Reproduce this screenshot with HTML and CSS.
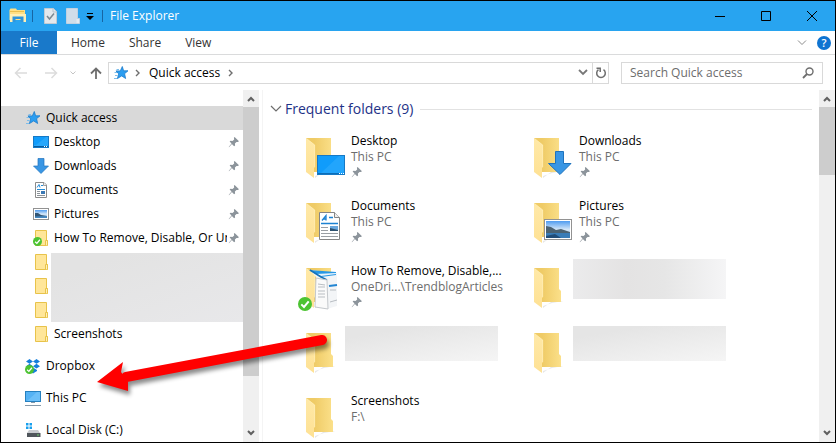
FILE: index.html
```html
<!DOCTYPE html>
<html lang="en">
<head>
<meta charset="utf-8">
<title>File Explorer</title>
<link rel="stylesheet" href="styles.css">
</head>
<body>
<svg class="defs" aria-hidden="true">
  <defs>
    <linearGradient id="back" x1="0" y1="0" x2="1" y2="0"><stop offset="0.3" stop-color="#efcb66"/><stop offset="1" stop-color="#fbe08a"/></linearGradient>
    <linearGradient id="flap" x1="0" y1="0" x2="0" y2="1"><stop offset="0" stop-color="#ffe9a8"/><stop offset="1" stop-color="#fee194"/></linearGradient>
    <linearGradient id="sky" x1="0" y1="0" x2="0" y2="1"><stop offset="0" stop-color="#4f9cf0"/><stop offset="0.5" stop-color="#d3e6f8"/><stop offset="1" stop-color="#a9c8e8"/></linearGradient>
  </defs>
  <symbol id="star" viewBox="0 0 16 16">
    <path d="M9.300 1.500L10.600 5.800H15L11.600 8.700L12.600 13.500L8.700 10.900L4.400 13.600L5.700 8.900L3 5.900H7.300Z" fill="#2b9df0" stroke="#1e7ccb" stroke-width=".8"/>
    <path d="M3.500 4.500H6M1.500 7.500H4M2 10.500H4.500M1 13.500H4" stroke="#7dbdea" stroke-width="1"/>
  </symbol>
  <symbol id="pin" viewBox="0 0 12 12">
    <path d="M6.600 1L11 5.200L9.800 6L8.500 5.900L6.900 7.600L7.100 9.400L6.100 10.200L3.900 8L1 11.300L.7 11L3.500 7.600L1.600 5.500L2.500 4.700L4.500 4.900L6.200 3.400L5.900 1.800Z" fill="#8c949b"/>
  </symbol>
  <symbol id="smallfolder" viewBox="0 0 16 16">
    <path d="M2.500 .5H13.500V10.500H14.500V15.500H2.500Z" fill="#ffe699" stroke="#e8c34a"/>
    <path d="M12.500 15V10.500H14.500V15.500" fill="#fff0b8" stroke="#e8c34a"/>
  </symbol>
  <symbol id="check" viewBox="0 0 14 14">
    <circle cx="7" cy="7" r="7" fill="#4cc332"/>
    <path d="M3.300 7.400L6 10L10.700 4.300" fill="none" stroke="#fff" stroke-width="2"/>
  </symbol>
  <symbol id="desktop" viewBox="0 0 16 16">
    <rect x=".5" y="2.500" width="15" height="11" fill="#109cfb" stroke="#1679c5"/>
    <path d="M3 11L13 3H15V12H1V11Z" fill="#38affc" opacity=".6"/>
    <path d="M1 12.500H11M12 12.500H13M14 12.500H15" stroke="#075b9e"/>
    <path d="M11 12.500H12M13 12.500H14" stroke="#fff"/>
  </symbol>
  <symbol id="down" viewBox="0 0 16 16">
    <path d="M5 .5H11V8H15.500L8 15.500L.5 8H5Z" fill="#3996e4" stroke="#1f73bd" stroke-width=".7"/>
  </symbol>
  <symbol id="doc" viewBox="0 0 16 16">
    <path d="M2.500 .5H11L13.500 3V15.500H2.500Z" fill="#fff" stroke="#8b8b8b"/>
    <path d="M10.500 .5V3.500H13.500" fill="#eee" stroke="#8b8b8b" stroke-width=".8"/>
    <path d="M4 5.500L6 2.500L7 5.500M8 3.500H10M4 7.500H12" fill="none" stroke="#248bd7"/>
    <path d="M4 9.500H7M4 11.500H7M4 13.500H12" stroke="#8b9298"/><rect x="8" y="9" width="4" height="3" fill="#3c79b5"/>
  </symbol>
  <symbol id="picture" viewBox="0 0 16 16">
    <rect x=".5" y="2.500" width="15" height="11" fill="#fff" stroke="#929292"/>
    <rect x="2" y="4" width="12" height="8" fill="url(#sky)"/>
    <path d="M2 7L5 7L8 9L14 10V12H2Z" fill="#315675"/><path d="M2 10.500L14 10V12H2Z" fill="#4487c0"/>
  </symbol>
  <symbol id="bigfolder" viewBox="0 0 48 48">
    <path d="M18 43L27 40L38 38L36 39H26L18 45Z" fill="#ddd" opacity=".7"/>
    <path d="M9 5H34V26L36 28V39H9Z" fill="url(#back)"/>
    <path d="M9 5L18 12V34L17 35V45L9 39Z" fill="url(#flap)"/>
    <path d="M9.500 5.500L17.700 12V34" fill="none" stroke="#fff0bd" stroke-width=".6"/>
  </symbol>
</svg>

<div class="window">
  <header class="titlebar">
    <svg class="app" width="18" height="16" viewBox="0 0 18 16"><path d="M.5 2L1.500 .5H7L8 2H16V12H.5Z" fill="#ffe085"/><path d="M1 3.500H15" stroke="#eac04f"/><path d="M1 6H17V14H13V10H5V14H1Z" fill="#fff0b5"/><path d="M3.500 14V8.500H14.500V14H11.500V11H6.500V14Z" fill="#2f95dc"/></svg>
    <span class="sep"></span>
    <button class="quick first" aria-label="Properties"><svg width="13" height="16" viewBox="0 0 13 16"><path d="M.5 .5H9.500L12.500 3.500V15.500H.5Z" fill="#e4e8ec" stroke="#c2cbd3"/><path d="M9 .5V4H12.500" fill="none" stroke="#b9c3cc"/><path d="M3 8L5.500 11L10 5.500" fill="none" stroke="#7d8992" stroke-width="1.500"/></svg></button>
    <button class="quick" aria-label="New folder"><svg width="14" height="16" viewBox="0 0 14 16"><path d="M.5 .5H11.500V10.500H13.500V15.500H.5Z" fill="#d0dde9" stroke="#c0d1e1"/><path d="M10.500 15V11H13V15Z" fill="#e3ebf2"/></svg></button>
    <button class="quick menu" aria-label="Customize toolbar"><svg width="8" height="8" viewBox="0 0 8 8"><path d="M1 1H7V2H1ZM0 4H8L4 8Z" fill="#000"/></svg></button>
    <span class="sep late"></span>
    <h1>File Explorer</h1>
    <div class="controls">
      <button aria-label="Minimize"><svg width="10" height="10" viewBox="0 0 10 10"><path d="M0 5.500H10"/></svg></button>
      <button aria-label="Maximize"><svg width="10" height="10" viewBox="0 0 10 10"><path d="M.5 .5H9.500V9.500H.5Z"/></svg></button>
      <button aria-label="Close"><svg width="10" height="10" viewBox="0 0 10 10"><path d="M0 0L10 10M10 0L0 10"/></svg></button>
    </div>
  </header>

  <nav class="ribbon" aria-label="Ribbon">
    <button class="file">File</button><button>Home</button><button>Share</button><button>View</button>
    <button class="expand" aria-label="Expand ribbon"><svg width="10" height="6" viewBox="0 0 10 6"><path d="M1 .5L5 4.500L9 .5" fill="none" stroke="#8b8b8b"/></svg></button>
    <button class="help" aria-label="Help">?</button>
  </nav>

  <div class="locator">
    <button class="arrow" aria-label="Back"><svg width="14" height="12" viewBox="0 0 14 12"><path d="M13 6H2M6.500 1L1.500 6L6.500 11" fill="none" stroke="#dcdcdc" stroke-width="1.500"/></svg></button>
    <button class="arrow" aria-label="Forward"><svg width="14" height="12" viewBox="0 0 14 12"><path d="M1 6H12M7.500 1L12.500 6L7.500 11" fill="none" stroke="#dcdcdc" stroke-width="1.500"/></svg></button>
    <button class="recent" aria-label="Recent locations"><svg width="6" height="4" viewBox="0 0 6 4"><path d="M.5 .5L3 3L5.500 .5" fill="none" stroke="#c4c4c4"/></svg></button>
    <button class="up" aria-label="Up"><svg width="12" height="12" viewBox="0 0 12 12"><path d="M6 12V1.500M1 6.500L6 1.500L11 6.500" fill="none" stroke="#6e6e6e" stroke-width="1.800"/></svg></button>
    <div class="address">
      <svg width="16" height="16"><use href="#star"/></svg>
      <svg class="crumb" width="5" height="8" viewBox="0 0 5 8"><path d="M1 1L4 4L1 7" fill="none" stroke="#6e6e6e" stroke-width="1.400"/></svg>
      <button>Quick access</button>
      <svg width="5" height="8" viewBox="0 0 5 8"><path d="M1 1L4 4L1 7" fill="none" stroke="#6e6e6e" stroke-width="1.400"/></svg>
      <button class="history" aria-label="Previous locations"><svg width="10" height="7" viewBox="0 0 10 7"><path d="M1 1L5 5L9 1" fill="none" stroke="#777" stroke-width="1.800"/></svg></button>
      <button class="refresh" aria-label="Refresh"><svg width="12" height="12" viewBox="0 0 12 12"><path d="M8.500 2.700A4.300 4.300 0 1 1 3.500 2.700" fill="none" stroke="#6e6e6e" stroke-width="1.500"/><path d="M1.500 1.200H5.200V5" fill="none" stroke="#6e6e6e" stroke-width="1.500"/></svg></button>
    </div>
    <div class="search">
      <input id="q" type="text" placeholder="Search Quick access">
      <label for="q" aria-label="Search Quick access"><svg width="12" height="12" viewBox="0 0 12 12"><circle cx="7.500" cy="4.500" r="3.500" fill="none" stroke="#6e6e6e" stroke-width="1.400"/><path d="M5 7L1 11" stroke="#6e6e6e" stroke-width="1.800"/></svg></label>
    </div>
  </div>

  <div class="body">
    <aside class="sidebar">
      <ul class="tree">
        <li class="top selected"><svg width="16" height="16"><use href="#star"/></svg><span>Quick access</span></li>
        <li><svg width="16" height="16"><use href="#desktop"/></svg><span>Desktop</span><svg class="pin" width="12" height="12"><use href="#pin"/></svg></li>
        <li><svg width="16" height="16"><use href="#down"/></svg><span>Downloads</span><svg class="pin" width="12" height="12"><use href="#pin"/></svg></li>
        <li><svg width="16" height="16"><use href="#doc"/></svg><span>Documents</span><svg class="pin" width="12" height="12"><use href="#pin"/></svg></li>
        <li><svg width="16" height="16"><use href="#picture"/></svg><span>Pictures</span><svg class="pin" width="12" height="12"><use href="#pin"/></svg></li>
        <li><svg width="16" height="16" viewBox="0 0 16 16"><use href="#smallfolder" width="16" height="16"/><use href="#check" y="7" width="9" height="9"/></svg><span>How To Remove, Disable, Or Uninstall</span><svg class="pin" width="12" height="12"><use href="#pin"/></svg></li>
        <li class="masked">
          <div class="stack"><svg width="16" height="16"><use href="#smallfolder"/></svg><svg width="16" height="16"><use href="#smallfolder"/></svg><svg width="16" height="16"><use href="#smallfolder"/></svg></div>
          <div class="mask"></div>
        </li>
        <li><svg width="16" height="16"><use href="#smallfolder"/></svg><span>Screenshots</span></li>
        <li class="top spaced"><svg width="16" height="16" viewBox="0 0 16 16"><path d="M4.500 1L8 3.400L4.500 5.800L1 3.400ZM11.500 1L15 3.400L11.500 5.800L8 3.400ZM4.500 5.800L8 8.200L4.500 10.600L1 8.200ZM11.500 5.800L15 8.200L11.500 10.600L8 8.200ZM8 9.500L12 12V13L8 15.500L4 13V12Z" fill="#157fdc"/><use href="#check" y="7" width="9" height="9"/></svg><span>Dropbox</span></li>
        <li class="top spaced"><svg width="16" height="16" viewBox="0 0 16 16"><rect x=".5" y="1.500" width="15" height="10" fill="#55b2f4" stroke="#2680bf"/><path d="M2 11L12 2H15V11Z" fill="#7cc8fa" opacity=".6"/><path d="M6 12.500H10M0 15.500H16" stroke="#8598a8"/></svg><span>This PC</span></li>
        <li class="top spaced"><svg width="16" height="16" viewBox="0 0 16 16"><path d="M1 1H3.500V3.500H1ZM4.500 1H7V3.500H4.500ZM1 4.500H3.500V7H1ZM4.500 4.500H7V7H4.500Z" fill="#18a0ee"/><path d="M4 8H13L15 11H2Z" fill="#c9ccd0"/><path d="M2 11H15.500V15H2Z" fill="#50565c"/><path d="M12 13H14" stroke="#6ad16a"/></svg><span>Local Disk (C:)</span></li>
      </ul>
      <div class="scroll long"><svg width="8" height="6" viewBox="0 0 8 6"><path d="M1 5L4 2L7 5"/></svg><i></i><svg width="8" height="6" viewBox="0 0 8 6"><path d="M1 1L4 4L7 1"/></svg></div>
    </aside>

    <main class="content">
      <section>
        <h2><svg width="12" height="8" viewBox="0 0 12 8"><path d="M1 1L6 6L11 1" fill="none" stroke="#6d6d6d" stroke-width="1.200"/></svg><span>Frequent folders (9)</span></h2>
        <div class="tiles">
          <article><svg width="48" height="48" viewBox="0 0 48 48"><use href="#bigfolder" width="48" height="48"/><rect x="20.500" y="22.500" width="27" height="19" fill="#109cfb" stroke="#1679c5"/><path d="M24 40L42 23H47V40Z" fill="#2fabfd" opacity=".6"/><path d="M21 40.500H42" stroke="#0b6db7"/><path d="M42 40.500H47" stroke="#fff" stroke-dasharray="1 1"/></svg><div class="info"><h3>Desktop</h3><p>This PC</p><svg width="12" height="12"><use href="#pin"/></svg></div></article>
          <article><svg width="48" height="48" viewBox="0 0 48 48"><use href="#bigfolder" width="48" height="48"/><path d="M30.500 18.500H38.500V30.500H46L35 41.500L23.500 30.500H30.500Z" fill="#3996e4" stroke="#1f73bd"/></svg><div class="info"><h3>Downloads</h3><p>This PC</p><svg width="12" height="12"><use href="#pin"/></svg></div></article>
          <article><svg width="48" height="48" viewBox="0 0 48 48"><use href="#bigfolder" width="48" height="48"/><path d="M22.500 14.500H37.500L42.500 19.500V41.500H22.500Z" fill="#fff" stroke="#858585"/><path d="M37.500 14.500V19.500H42.500" fill="#eee" stroke="#858585"/><path d="M25 22.500L29 17.500V22.500M26.500 21H29M32 19.500H36M24 25.500H41" fill="none" stroke="#1d82d2" stroke-width="1.300"/><path d="M24 29.500H31M24 32.500H31M24 35.500H41M24 38.500H41" stroke="#9a9fa4"/><rect x="33" y="28" width="8" height="5" fill="#69a7dd"/><path d="M33 30L41 32V33H33Z" fill="#2d516f"/></svg><div class="info"><h3>Documents</h3><p>This PC</p><svg width="12" height="12"><use href="#pin"/></svg></div></article>
          <article><svg width="48" height="48" viewBox="0 0 48 48"><use href="#bigfolder" width="48" height="48"/><rect x="19.500" y="21.500" width="27" height="20" fill="#fff" stroke="#929292"/><rect x="21" y="23" width="24" height="17" fill="url(#sky)"/><path d="M21 28L26 29L31 32L36 31L45 34V36H21Z" fill="#4b6272"/><path d="M21 35H45V40H21Z" fill="#397cb7"/><path d="M21 38L30 36L36 40H21Z" fill="#214d78"/></svg><div class="info"><h3>Pictures</h3><p>This PC</p><svg width="12" height="12"><use href="#pin"/></svg></div></article>
          <article><svg width="48" height="48" viewBox="0 0 48 48"><use href="#bigfolder" width="48" height="48"/><path d="M13 7L40 10V43L30 46L18 44L19 14Z" fill="#f3f5f7"/><path d="M12 7L39 9V12L24 14Z" fill="#2697e4"/><path d="M19 11L39 10V11L24 13Z" fill="#e9f4fc"/><path d="M13 7L24 14L30 17" fill="none" stroke="#1572b9" stroke-width="1.500"/><path d="M19 15L30 17L31 46L18 44Z" fill="#fafafa" stroke="#c4c8cc"/><path d="M32 23L40 22" stroke="#2385d2" stroke-width="2"/><path d="M33 27H39M33 39L40 37M21 21L28 22M21 24H28M21 28H28M21 31H28M21 34H28" stroke="#b8bdc2"/><use href="#check" x="1" y="34" width="14" height="14"/></svg><div class="info"><h3>How To Remove, Disable,...</h3><p>OneDri...\TrendblogArticles</p><svg width="12" height="12"><use href="#pin"/></svg></div></article>
          <article><svg width="48" height="48"><use href="#bigfolder"/></svg><div class="mask tall"></div></article>
          <article><svg width="48" height="48"><use href="#bigfolder"/></svg><div class="mask"></div></article>
          <article><svg width="48" height="48"><use href="#bigfolder"/></svg><div class="mask"></div></article>
          <article><svg width="48" height="48"><use href="#bigfolder"/></svg><div class="info"><h3>Screenshots</h3><p>F:\</p></div></article>
        </div>
      </section>
      <div class="scroll short"><svg width="8" height="6" viewBox="0 0 8 6"><path d="M1 5L4 2L7 5"/></svg><i></i><svg width="8" height="6" viewBox="0 0 8 6"><path d="M1 1L4 4L7 1"/></svg></div>
    </main>
  </div>
</div>
<svg class="pointer" width="250" height="80" viewBox="0 0 250 80" aria-hidden="true"><path d="M232 14L36 51" fill="none" stroke="#f00" stroke-width="10" stroke-linecap="round"/><path d="M7 56L33 36L31 46L38 56L38 65Z" fill="#f00"/></svg>
</body>
</html>
```
FILE: styles.css
```css
* { box-sizing: border-box; }
body { margin: 0; font: 12px/16px "Open Sans", "Noto Sans", sans-serif; color: #000; }
button, input { margin: 0; padding: 0; border: 0; background: none; font: inherit; color: inherit; }
h1, h2, h3, p, ul { margin: 0; padding: 0; font: inherit; }
svg { display: block; flex: none; }
.defs { position: absolute; width: 0; height: 0; }

.window { display: flex; flex-direction: column; height: 100vh; border: 1px solid #000; background: #fff; overflow: hidden; }

.titlebar { display: flex; align-items: center; flex: none; height: 30px; padding-left: 8px; background: #28a4f0; color: #fff; }
.sep { width: 1px; height: 12px; margin-left: 5px; background: #1765a3; }
.sep.late { margin: 0 7px 0 8px; }
.quick { margin-left: 9px; }
.quick.first { margin-left: 11px; }
.quick.menu { margin-left: 6px; }
.controls { display: flex; margin-left: auto; }
.controls button { display: grid; place-items: center; width: 46px; height: 30px; }
.controls path { fill: none; stroke: #000; }

.ribbon { display: flex; flex: none; height: 24px; border-bottom: 1px solid #dadbdc; color: #333; }
.ribbon button { padding: 0 12px; }
.ribbon .file { width: 56px; margin-right: 2px; background: #1979ca; color: #fff; }
.ribbon .expand { margin-left: auto; padding: 0 10px 0 0; }
.ribbon .help { align-self: center; width: 14px; height: 14px; margin-right: 4px; padding: 0; border-radius: 50%; background: #0f74d1; color: #fff; font-size: 11px; line-height: 14px; font-weight: 600; }

.locator { display: flex; align-items: center; flex: none; height: 35px; padding: 0 12px 0 13px; }
.arrow { margin-right: 16px; }
.arrow + .recent { margin: 0 14px 0 -4px; }
.up { margin-right: 6px; }
.address { display: flex; align-items: center; flex: 1; height: 22px; padding-left: 4px; border: 1px solid #d9d9d9; }
.address .crumb { margin: 0 9px 0 6px; }
.address button + svg { margin-left: 8px; }
.address .history { margin-left: auto; padding-right: 4px; }
.address .refresh { display: grid; place-items: center; align-self: stretch; width: 16px; border-left: 1px solid #d9d9d9; }
.search { display: flex; align-items: center; width: 202px; height: 22px; margin-left: 12px; padding: 0 8px; border: 1px solid #d9d9d9; }
.search input { flex: 1; min-width: 0; outline: 0; }
.search input::placeholder { color: #6d6d6d; opacity: 1; }

.body { display: flex; flex: 1; min-height: 0; }
.sidebar { display: flex; flex: none; width: 262px; padding-right: 3px; border-right: 1px solid #f4f4f4; }
.tree { flex: 1; min-width: 0; padding-top: 16px; list-style: none; }
.tree li { display: flex; align-items: center; height: 24px; padding: 0 3px 0 32px; gap: 5px; }
.tree .top { padding-left: 24px; }
.tree .selected { background: #d9d9d9; }
.tree .spaced { margin-top: 8px; }
.tree span { flex: 1; min-width: 0; overflow: hidden; white-space: nowrap; }
.tree .pin { margin-left: -4px; }
.tree .masked { height: 72px; padding-right: 0; gap: 2px; }
.stack { display: grid; gap: 8px; }
.mask { background: linear-gradient(160deg, #e3e3e3 20%, #e8e8ea); }
.tree .mask { flex: 1; align-self: flex-end; height: 69px; }

.scroll { display: flex; flex-direction: column; align-items: center; flex: none; width: 16px; padding: 6px 0; background: #f0f0f0; }
.scroll path { fill: none; stroke: #606060; stroke-width: 2; }
.scroll i { width: 16px; margin-top: 5px; background: #cdcdcd; }
.scroll svg:last-child { margin-top: auto; }
.long i { height: 79%; }
.short i { height: 68px; }

.content { display: flex; flex: 1; min-width: 0; }
section { flex: 1; min-width: 0; padding: 9px 7px 0 7px; }
h2 { display: flex; align-items: center; gap: 3px; color: #1e3287; font-size: 14px; line-height: 20px; }
h2::after { content: ""; flex: 1; height: 1px; margin-left: 4px; background: #e2e2e2; }
.tiles { display: grid; grid-template-columns: repeat(auto-fill, 228px); grid-auto-rows: 65px; padding: 6px 0 0 27px; }
article { display: flex; padding-top: 8px; }
.info { min-width: 0; padding-left: 6px; white-space: nowrap; }
.info p { color: #6d6d6d; }
.info svg { margin-top: 1px; }
article .mask { width: 153px; height: 35px; margin-top: -2px; background: linear-gradient(170deg, #e5e5e5 20%, #f5f5f5); }
article .mask.tall { height: 40px; margin-top: -4px; background: linear-gradient(90deg, #ebebec, #e4e3e3 35%, #e6e6e6 60%, #f5f5f6); }

.pointer { position: absolute; left: 90px; top: 326px; filter: drop-shadow(2px 4px 2px rgb(0 0 0 / 45%)); }
```
